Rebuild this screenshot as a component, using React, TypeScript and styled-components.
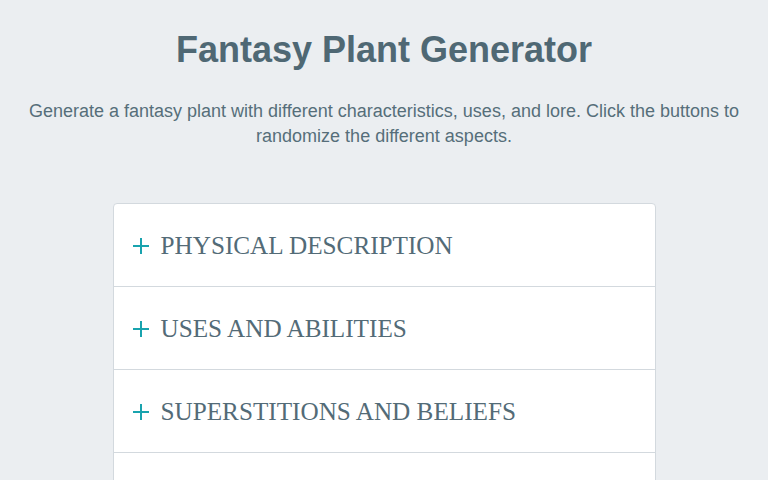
import styled, { createGlobalStyle } from "styled-components";

const GlobalStyle = createGlobalStyle`
    body {
        margin: 0;
        background: #ebeef1;
        font-family: "Liberation Sans", Arial, sans-serif;
    }
`;

const Page = styled.div`
    display: flex;
    flex-direction: column;
    align-items: center;
    padding: 29px 20px 0;
`;

const Title = styled.h1`
    margin: 0;
    font-size: 36px;
    line-height: 42px;
    font-weight: bold;
    color: #4f6874;
`;

const Intro = styled.p`
    margin: 28px 0 0;
    max-width: 720px;
    text-align: center;
    font-size: 18px;
    line-height: 25px;
    color: #566e7a;
`;

const Accordion = styled.div`
    margin-top: 54px;
    width: 543px;
    background: #fff;
    border: 1px solid #d3d9de;
    border-radius: 4px;
    box-sizing: border-box;
`;

const Row = styled.div`
    display: flex;
    align-items: center;
    gap: 12px;
    height: 80px;
    padding: 2px 19px 0;
    border-top: 1px solid #d3d9de;
    &:first-child {
        border-top: none;
    }
`;

const Heading = styled.span`
    font-family: "Liberation Serif", "Times New Roman", serif;
    font-size: 25.2px;
    color: #536b77;
    text-transform: uppercase;
`;

const Plus = () => (
    <svg width="16" height="16" viewBox="0 0 16 16">
        <path d="M8 0V16M0 8H16" stroke="#19a3ae" strokeWidth="2" />
    </svg>
);

const sections = [
    "Physical Description",
    "Uses and Abilities",
    "Superstitions and Beliefs",
    "Lore and History",
];

const App = () => {
    return (
        <>
            <GlobalStyle />
            <Page>
                <Title>Fantasy Plant Generator</Title>
                <Intro>
                    Generate a fantasy plant with different characteristics, uses, and lore. Click the buttons to
                    randomize the different aspects.
                </Intro>
                <Accordion>
                    {sections.map((s) => (
                        <Row key={s}>
                            <Plus />
                            <Heading>{s}</Heading>
                        </Row>
                    ))}
                </Accordion>
            </Page>
        </>
    );
};

export default App;
